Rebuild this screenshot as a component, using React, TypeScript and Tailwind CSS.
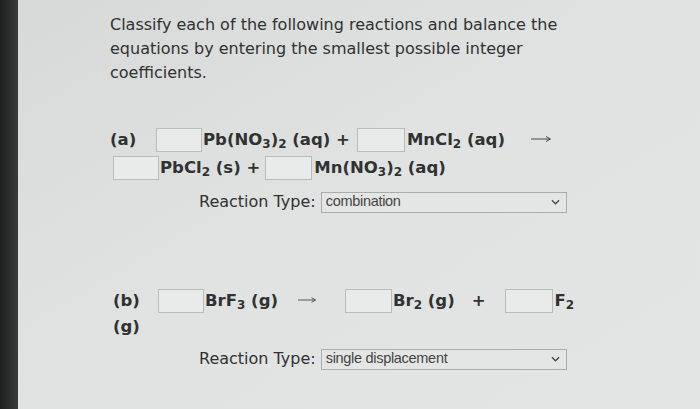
import React from "react";

const Box = ({ className = "w-[46px]" }: { className?: string }) => (
  <span className={`block h-[24px] border border-[#b9bcbb] bg-[#e9ebea] shrink-0 ${className}`} />
);

const Sub = ({ children }: { children: React.ReactNode }) => (
  <sub className="text-[12px] relative top-[3px] font-semibold">{children}</sub>
);

const Arrow = ({ w = "w-[22px]" }: { w?: string }) => (
  <svg viewBox="0 0 22 8" className={`${w} h-[8px]`}>
    <path d="M1 4 H20 M16 1.5 L20.5 4 L16 6.5" stroke="#444" strokeWidth="1" fill="none" />
  </svg>
);

const Select = ({ value }: { value: string }) => (
  <div className="w-[246px] h-[21px] border border-[#a9acab] bg-[#e4e6e5] flex items-center justify-between pl-[4px] pr-[6px]">
    <span className="text-[14.5px] text-[#444] font-['Liberation_Sans',Arial,sans-serif] tracking-[-0.3px]">{value}</span>
    <svg viewBox="0 0 10 6" className="w-[9px] h-[6px]">
      <path d="M1 1 L5 5 L9 1" stroke="#444" strokeWidth="1.4" fill="none" />
    </svg>
  </div>
);

export default function App() {
  return (
    <div className="w-[700px] h-[409px] flex bg-gradient-to-br from-[#d6d9d8] via-[#e0e3e2] to-[#e2e5e4] text-[#303232] font-['DejaVu_Sans',Verdana,sans-serif] overflow-hidden">
      <div className="w-[18px] h-full bg-gradient-to-r from-[#1e1f1f] to-[#3a3c3c] shrink-0" />
      <div className="flex-1 pl-[92px] pt-[13px]">
        {/* Prompt */}
        <p className="text-[16px] leading-[24px] w-[480px]">
          Classify each of the following reactions and balance the equations by entering the smallest possible integer coefficients.
        </p>

        {/* (a) */}
        <div className="mt-[42px] font-semibold text-[16.5px]">
          <div className="flex items-center h-[26px]">
            <span className="w-[46px]">(a)</span>
            <Box />
            <span className="ml-[1px]">Pb(NO<Sub>3</Sub>)<Sub>2</Sub> (aq) +</span>
            <Box className="w-[48px] ml-[7px]" />
            <span className="ml-[2px]">MnCl<Sub>2</Sub> (aq)</span>
            <span className="ml-[25px] mt-[-2px] flex"><Arrow /></span>
          </div>
          <div className="flex items-center h-[26px] mt-[2px] ml-[3px]">
            <Box />
            <span className="ml-[1px]">PbCl<Sub>2</Sub> (s) +</span>
            <Box className="w-[47px] ml-[5px]" />
            <span className="ml-[2px]">Mn(NO<Sub>3</Sub>)<Sub>2</Sub> (aq)</span>
          </div>
        </div>
        <div className="flex items-center mt-[9px] ml-[89px] gap-[5px]">
          <span className="text-[16px]">Reaction Type:</span>
          <Select value="combination" />
        </div>

        {/* (b) */}
        <div className="mt-[74px] font-semibold text-[16.5px] ml-[3px]">
          <div className="flex items-center h-[26px]">
            <span className="w-[45px]">(b)</span>
            <Box />
            <span className="ml-[1px]">BrF<Sub>3</Sub> (g)</span>
            <span className="ml-[19px] mt-[-2px] flex"><Arrow w="w-[20px]" /></span>
            <Box className="w-[47px] ml-[28px]" />
            <span className="ml-[1px]">Br<Sub>2</Sub> (g)</span>
            <span className="ml-[17px]">+</span>
            <Box className="w-[48px] ml-[19px]" />
            <span className="ml-[2px]">F<Sub>2</Sub></span>
          </div>
          <div className="h-[24px] leading-[24px] mt-[1px]">(g)</div>
        </div>
        <div className="flex items-center mt-[8px] ml-[89px] gap-[5px]">
          <span className="text-[16px]">Reaction Type:</span>
          <Select value="single displacement" />
        </div>
      </div>
    </div>
  );
}
